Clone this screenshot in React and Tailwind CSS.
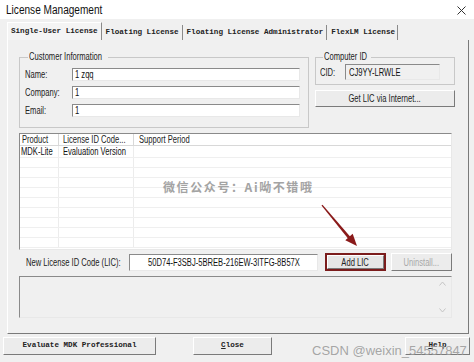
import React from "react";

const sunken = "border border-t-[#8a8a8a] border-l-[#8a8a8a] border-r-[#e8e8e8] border-b-[#e8e8e8]";
const raised = "border border-t-white border-l-white border-r-[#7a7a7a] border-b-[#7a7a7a] bg-[#ececec]";
const mono = "font-['Liberation_Mono',monospace] font-bold text-[7.6px]";

function S({ children, c = false }) {
  return (
    <span className={`inline-block whitespace-nowrap scale-x-[0.76] ${c ? "origin-center" : "origin-left"}`}>{children}</span>
  );
}

function Field({ label, value }) {
  return (
    <div className="flex items-center h-[13px]">
      <span className="w-[47px] text-[#222]"><S>{label}</S></span>
      <div className={`${sunken} bg-white h-[13px] w-[228px] flex items-center pl-[2px] leading-none`}><S>{value}</S></div>
    </div>
  );
}

export default function App() {
  const rows = Array.from({ length: 9 });
  return (
    <div className="relative w-[474px] h-[362px] overflow-hidden bg-[#f0f0f0] text-[10px] text-[#111] font-['Liberation_Sans',Arial,sans-serif]">
      {/* Title bar */}
      <div className="h-[19px] bg-white flex items-center justify-between pl-[6px] pr-[8px]">
        <span className="text-[12px] text-[#111] inline-block whitespace-nowrap origin-left scale-x-[0.84]">License Management</span>
        <svg width="9" height="9" viewBox="0 0 9 9" className="mt-[1px]">
          <path d="M0.5 0.5 L8.5 8.5 M8.5 0.5 L0.5 8.5" stroke="#333" strokeWidth="1" />
        </svg>
      </div>

      {/* Tabs */}
      <div className="pl-[7px]">
        <div className={`flex items-end h-[21px] ${mono} text-[#222]`}>
          <div className="h-[18px] flex items-center px-[3px] border-t border-l border-white border-r border-r-[#8a8a8a] bg-[#f4f4f4]">Single-User License</div>
          <div className="h-[15px] flex items-center pl-[4px] pr-[3px] border-r border-[#8a8a8a]">Floating License</div>
          <div className="h-[15px] flex items-center pl-[4px] pr-[3px] border-r border-[#8a8a8a]">Floating License Administrator</div>
          <div className="h-[15px] flex items-center pl-[4px] pr-[2px] border-r border-[#8a8a8a]">FlexLM License</div>
        </div>

        {/* Panel */}
        <div className="w-[462px] h-[294px] border-r border-b border-r-[#7a7a7a] border-b-[#7a7a7a] border-l border-l-white pl-[11px] pt-[11px]">
          <div className="flex gap-[6px]">
            {/* Customer info */}
            <fieldset className="w-[290px] h-[77px] border border-[#c8c8c8] pl-[5px]">
              <legend className="ml-[3px] px-[1px] w-[80px] leading-[12px] text-[#222]"><S>Customer Information</S></legend>
              <div className="flex flex-col gap-[5px] mt-[5px]">
                <Field label="Name:" value="1 zqq" />
                <Field label="Company:" value="1" />
                <Field label="Email:" value="1" />
              </div>
            </fieldset>

            <div className="w-[140px] flex flex-col">
              <fieldset className="h-[34px] border border-[#c8c8c8] pl-[4px]">
                <legend className="ml-[3px] px-[1px] w-[48px] leading-[12px] text-[#222]"><S>Computer ID</S></legend>
                <div className="flex items-center mt-[1px]">
                  <span className="w-[25px] text-[#222]"><S>CID:</S></span>
                  <div className={`${sunken} bg-[#f0f0f0] h-[16px] w-[95px] flex items-center pl-[3px]`}><S>CJ9YY-LRWLE</S></div>
                </div>
              </fieldset>
              <div className={`${raised} mt-[5px] h-[17px] flex items-center justify-center text-[#222]`}><S c>Get LIC via Internet...</S></div>
            </div>
          </div>

          {/* List */}
          <div className={`${sunken} bg-white mt-[5px] w-[433px] h-[117px] overflow-hidden`}>
            <div className="flex h-[12px] border-b border-[#d8d8d8] text-[#222] leading-[11px]">
              <div className="w-[39px] pl-[2px] border-r border-[#d8d8d8]"><S>Product</S></div>
              <div className="w-[75px] pl-[4px] border-r border-[#d8d8d8]"><S>License ID Code...</S></div>
              <div className="flex-1 pl-[5px]"><S>Support Period</S></div>
            </div>
            <div className="flex h-[12px] border-b border-[#efefef] leading-[12px]">
              <div className="w-[39px] pl-[1px] border-r border-[#ececec]"><S>MDK-Lite</S></div>
              <div className="w-[75px] pl-[4px] border-r border-[#ececec]"><S>Evaluation Version</S></div>
              <div className="flex-1"></div>
            </div>
            {rows.map((_, i) => (
              <div key={i} className="flex h-[10px] border-b border-[#efefef]">
                <div className="w-[39px] border-r border-[#ececec]"></div>
                <div className="w-[75px] border-r border-[#ececec]"></div>
                <div className="flex-1"></div>
              </div>
            ))}
          </div>

          {/* LIC row */}
          <div className="mt-[3px] w-[433px] h-[18px] flex items-center">
            <span className="w-[110px] pl-[7px] text-[#222]"><S>New License ID Code (LIC):</S></span>
            <div className={`${sunken} bg-white w-[189px] h-[17px] flex items-center justify-center`}><S c>50D74-F3SBJ-5BREB-216EW-3ITFG-8B57X</S></div>
            <div className="ml-[7px] w-[61px] h-[18px] border-2 border-[#7b1c1c] flex">
              <div className="flex-1 border border-t-white border-l-white border-r-[#7a7a7a] border-b-[#7a7a7a] bg-[#e6e6e6] flex items-center justify-center text-[#222]"><S c>Add LIC</S></div>
            </div>
            <div className={`${raised} ml-[5px] w-[61px] h-[18px] flex items-center justify-center text-[#a8a8a8]`}><S c>Uninstall...</S></div>
          </div>

          {/* Status box */}
          <div className={`${sunken} mt-[5px] w-[433px] h-[42px] flex justify-end`}>
            <div className="w-[14px] flex flex-col items-center justify-between py-[4px] mr-[2px]">
              <svg width="7" height="5" viewBox="0 0 7 5"><path d="M0.5 4.5 L3.5 1 L6.5 4.5" fill="none" stroke="#c4c4c4" strokeWidth="1" /></svg>
              <svg width="7" height="5" viewBox="0 0 7 5"><path d="M0.5 0.5 L3.5 4 L6.5 0.5" fill="none" stroke="#c4c4c4" strokeWidth="1" /></svg>
            </div>
          </div>
        </div>
      </div>

      {/* Bottom buttons */}
      <div className={`flex items-center h-[18px] mt-[3px] ${mono} text-[#222]`}>
        <div className={`${raised} ml-[3px] w-[153px] h-[18px] flex items-center justify-center`}>Evaluate MDK Professional</div>
        <div className={`${raised} ml-[37px] w-[79px] h-[18px] flex items-center justify-center`}><span><span className="underline">C</span>lose</span></div>
        <div className={`${raised} ml-[133px] w-[65px] h-[18px] flex items-center justify-center`}><span><span className="underline">H</span>elp</span></div>
      </div>

      {/* Watermarks and arrow overlay */}
      <div className="absolute left-[163px] top-[179px] text-[12px] tracking-[1.6px] text-[#a3a3a3] font-['Noto_Sans_CJK_SC',sans-serif] font-bold leading-[16px]">
        微信公众号：Ai呦不错哦
      </div>
      <svg className="absolute left-0 top-0" width="474" height="362" viewBox="0 0 474 362">
        <polygon points="321.5,205.5 322.5,204.8 350.5,237 348.2,238.8" fill="#8a1a1a" />
        <polygon points="357,246 345.3,240.2 352.7,233.8" fill="#8a1a1a" />
      </svg>
      <div className="absolute left-[312px] top-[343px] text-[13px] leading-[16px] text-[#9c9c9c]/90 font-['Liberation_Sans',Arial,sans-serif]">
        CSDN @weixin_54557847
      </div>
    </div>
  );
}
